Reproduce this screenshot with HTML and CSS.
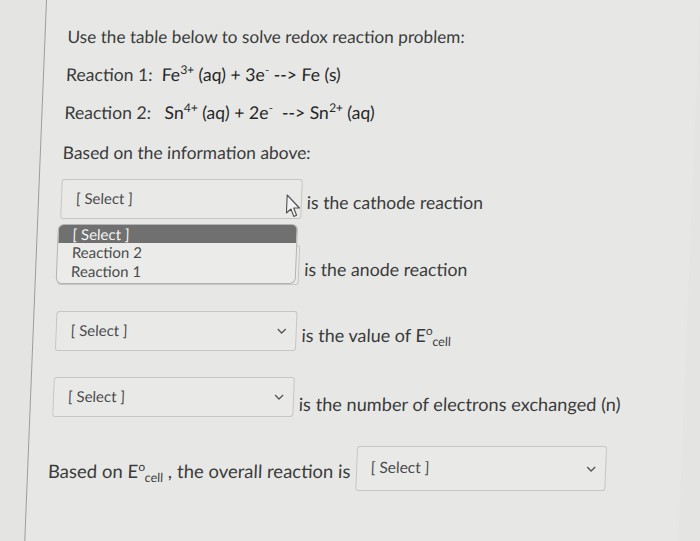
FILE: index.html
```html
<!DOCTYPE html>
<html>
<head>
<meta charset="utf-8">
<link rel="stylesheet" href="styles.css">
</head>
<body>
<div class="sheet">
  <p class="line">Use the table below to solve redox reaction problem:</p>
  <p class="line rx">Reaction 1:&nbsp; <span class="chem">Fe<sup>3+</sup> (aq) + 3e<sup>-</sup> --&gt; Fe (s)</span></p>
  <p class="line rx">Reaction 2:&nbsp;&nbsp; <span class="chem">Sn<sup>4+</sup> (aq) + 2e<sup>-</sup>&nbsp; --&gt; Sn<sup>2+</sup> (aq)</span></p>
  <p class="line based">Based on the information above:</p>

  <div class="questions">
    <div class="q">
      <div class="select">
        <span class="val">[ Select ]</span>
        <svg class="cursor" width="16" height="24" viewBox="0 0 16 24"><path d="M1 1 L1 19 L5.3 15 L8.5 22.4 L11.2 21.2 L8.1 14 L13.8 14 Z" fill="#f2f2f2" stroke="#505050" stroke-width="1.1" stroke-linejoin="round"/></svg>
      </div>
      <span class="label l1">is the cathode reaction</span>
      <ul class="menu">
        <li class="active">[ Select ]</li>
        <li>Reaction 2</li>
        <li>Reaction 1</li>
      </ul>
    </div>
    <div class="q">
      <div class="select">
        <span class="val">[ Select ]</span>
        <svg class="chev" width="10" height="6" viewBox="0 0 10 6"><path d="M1 1 L5 5 L9 1" fill="none" stroke="#555" stroke-width="1.3"/></svg>
      </div>
      <span class="label l2">is the anode reaction</span>
    </div>
    <div class="q">
      <div class="select">
        <span class="val">[ Select ]</span>
        <svg class="chev" width="10" height="6" viewBox="0 0 10 6"><path d="M1 1 L5 5 L9 1" fill="none" stroke="#555" stroke-width="1.3"/></svg>
      </div>
      <span class="label l3">is the value of E<sup>o</sup><sub>cell</sub></span>
    </div>
    <div class="q">
      <div class="select">
        <span class="val">[ Select ]</span>
        <svg class="chev" width="10" height="6" viewBox="0 0 10 6"><path d="M1 1 L5 5 L9 1" fill="none" stroke="#555" stroke-width="1.3"/></svg>
      </div>
      <span class="label l4">is the number of electrons exchanged (n)</span>
    </div>
  </div>

  <div class="final">
    <span class="label l5">Based on E<sup>o</sup><sub>cell</sub> , the overall reaction is</span>
    <div class="select wide">
      <span class="val">[ Select ]</span>
      <svg class="chev" width="10" height="6" viewBox="0 0 10 6"><path d="M1 1 L5 5 L9 1" fill="none" stroke="#555" stroke-width="1.3"/></svg>
    </div>
  </div>
</div>
</body>
</html>
```

FILE: styles.css
```css
html, body {
  margin: 0;
  padding: 0;
  background: #e4e5e3;
  overflow: hidden;
}
body {
  font-family: Lato, "Open Sans", sans-serif;
  color: #3a3b3b;
  height: 541px;
}
.sheet {
  box-sizing: border-box;
  margin-left: 46px;
  border-left: 1px solid #9c9d9b;
  height: 541px;
  padding: 27px 0 0 22px;
  transform: skewX(-2.3deg);
  transform-origin: 0 0;
  background: #e7e8e6;
}
.line {
  margin: 0 0 18px;
  font-size: 17.2px;
  line-height: 20px;
  white-space: nowrap;
}
.line.rx {
  font-size: 17.6px;
}
.line.based {
  margin-top: 20px;
  font-size: 17.4px;
}
.chem {
  color: #262727;
}
sup, sub {
  font-size: 12px;
  line-height: 0;
}
sup { vertical-align: 7px; }
sub { vertical-align: -4px; font-size: 12.5px; }
.questions {
  margin-top: -2px;
  display: flex;
  flex-direction: column;
  gap: 26px;
}
.q {
  position: relative;
  display: flex;
  align-items: center;
  gap: 5px;
}
.select {
  position: relative;
  box-sizing: border-box;
  width: 241px;
  height: 40px;
  border: 1px solid #c6c7c5;
  border-radius: 3px;
  background: #e9eae8;
  display: flex;
  align-items: center;
  justify-content: space-between;
  padding: 0 9px 0 14px;
  flex: none;
}
.val {
  font-size: 15px;
  color: #4a4b4b;
  margin-top: -2px;
}
.label {
  font-size: 17.6px;
  line-height: 20px;
  padding-top: 7px;
  white-space: nowrap;
}
.label.l2 { font-size: 17.8px; }
.label.l3 { font-size: 18px; }
.label.l4 { font-size: 18.2px; padding-top: 13px; }
.label.l5 { font-size: 18.5px; padding-top: 4px; }
.cursor {
  position: absolute;
  right: -1px;
  top: 14px;
}
.menu {
  position: absolute;
  left: -2px;
  top: 45px;
  width: 240px;
  height: 60px;
  box-sizing: border-box;
  margin: 0;
  padding: 0;
  list-style: none;
  border: 1px solid #b3b4b2;
  border-radius: 6px;
  background: #ebecea;
  overflow: hidden;
  z-index: 2;
  font-size: 15px;
  line-height: 18px;
  color: #4a4b4b;
}
.menu li {
  padding-left: 14px;
  height: 19px;
}
.menu li.active {
  background: #6f706f;
  color: #f5f5f5;
  height: 18px;
}
.final {
  margin-top: 29px;
  margin-left: -2px;
  display: flex;
  align-items: center;
  gap: 5px;
}
.select.wide {
  width: 250px;
  height: 45px;
}
.select.wide .val {
  font-size: 15.5px;
  margin-top: -4px;
}
```
